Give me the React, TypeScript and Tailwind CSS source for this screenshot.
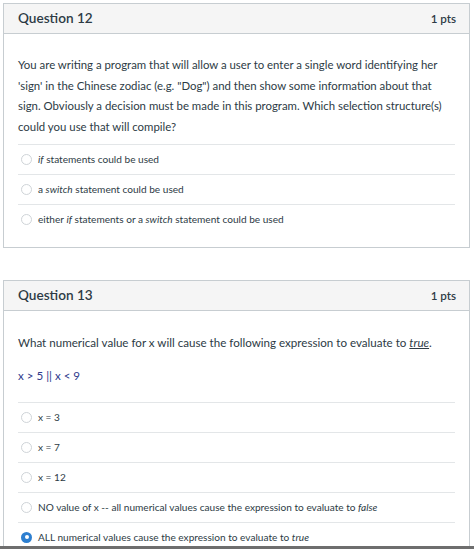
import type { ReactNode } from "react";

const font = { fontFamily: "Lato, 'Open Sans', sans-serif" };

function Radio({ checked = false }: { checked?: boolean }) {
  if (checked) {
    return (
      <span className="flex h-[11px] w-[11px] shrink-0 items-center justify-center rounded-full bg-[#2d7fd0]">
        <span className="h-[4px] w-[4px] rounded-full bg-white" />
      </span>
    );
  }
  return <span className="h-[11px] w-[11px] shrink-0 rounded-full border border-[#cfd4d8] bg-white" />;
}

function Option({ children, checked }: { children: ReactNode; checked?: boolean }) {
  return (
    <div className="flex h-[30px] items-center gap-[6px] border-t border-[#e3e6e8] pl-[3px] text-[10.1px] text-[#2d3b45]">
      <Radio checked={checked} />
      <span>{children}</span>
    </div>
  );
}

function Card({ title, top = 21, children }: { title: string; top?: number; children: ReactNode }) {
  return (
    <div className="border border-[#c7cdd1] bg-white">
      <div className="flex h-[30px] items-center justify-between border-b border-[#c7cdd1] bg-[#f5f5f5] pl-[14px] pr-[13px] text-[#2d3b45]">
        <span className="text-[13.6px] font-semibold">{title}</span>
        <span className="text-[11.6px] font-semibold">1 pts</span>
      </div>
      <div className={top === 21 ? "px-[14px] pt-[21px]" : "px-[14px] pt-[22px]"}>{children}</div>
    </div>
  );
}

export default function App() {
  return (
    <div className="relative h-[549px] w-[474px] overflow-hidden bg-white pl-[3px] pr-[4px] pt-[3px]" style={font}>
      <Card title="Question 12">
        <p className="text-[11.4px] leading-[20.7px] text-[#2d3b45]">
          You are writing a program that will allow a user to enter a single word identifying her 'sign' in the Chinese
          zodiac (e.g. "Dog") and then show some information about that sign. Obviously a decision must be made in this
          program. Which selection structure(s) could you use that will compile?
        </p>
        <div className="mt-[6px] pb-[13px]">
          <Option>
            <i>if</i> statements could be used
          </Option>
          <Option>
            a <i>switch</i> statement could be used
          </Option>
          <Option>
            either <i>if</i> statements or a <i>switch</i> statement could be used
          </Option>
        </div>
      </Card>

      <div className="mt-[32px]">
        <Card title="Question 13" top={22}>
          <p className="text-[11.6px] leading-[20.5px] text-[#2d3b45]">
            What numerical value for x will cause the following expression to evaluate to{" "}
            <i className="underline">true</i>.
          </p>
          <p className="mt-[13px] text-[11.6px] leading-[20.5px] text-[#2e3a8c]">x &gt; 5 || x &lt; 9</p>
          <div className="mt-[15px]">
            <Option>x = 3</Option>
            <Option>x = 7</Option>
            <Option>x = 12</Option>
            <Option>
              NO value of x -- all numerical values cause the expression to evaluate to <i>false</i>
            </Option>
            <Option checked>
              ALL numerical values cause the expression to evaluate to <i>true</i>
            </Option>
          </div>
        </Card>
      </div>

      <div className="absolute bottom-0 left-0 h-[3px] w-full bg-[#6e6e6e]" />
    </div>
  );
}
